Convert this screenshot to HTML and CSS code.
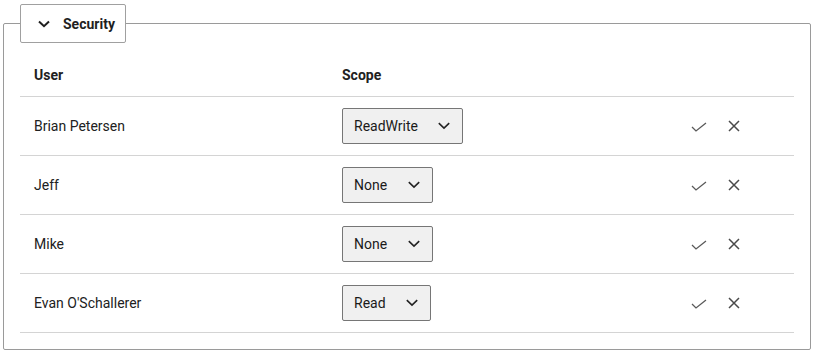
FILE: index.html
```html
<!DOCTYPE html>
<html>
<head>
<meta charset="utf-8">
<link rel="stylesheet" href="styles.css">
</head>
<body>
<fieldset class="panel">
  <legend class="panel-legend">
    <svg class="legend-chevron" width="12" height="8" viewBox="0 0 12 8"><path d="M1 1.5 L6 6.2 L11 1.5" fill="none" stroke="#1f1f1f" stroke-width="2"/></svg>
    <span>Security</span>
  </legend>
  <div class="grid">
    <div class="row head">
      <div class="cell">User</div>
      <div class="cell">Scope</div>
      <div class="cell"></div>
    </div>
    <div class="row">
      <div class="cell">Brian Petersen</div>
      <div class="cell"><div class="select w120"><span>ReadWrite</span><svg class="sel-chev" width="12" height="8" viewBox="0 0 12 8"><path d="M0.8 1.2 L6 6.2 L11.2 1.2" fill="none" stroke="#222" stroke-width="1.6"/></svg></div></div>
      <div class="cell actions">
        <span class="icon"><svg width="24" height="24" viewBox="0 0 24 24"><path d="M5 13 L9 17 L19 9" fill="none" stroke="#5a5a5a" stroke-width="1.3"/></svg></span>
        <span class="icon"><svg width="24" height="24" viewBox="0 0 24 24"><path d="M7 7 L17 17 M17 7 L7 17" fill="none" stroke="#4a4a4a" stroke-width="1.5"/></svg></span>
      </div>
    </div>
    <div class="row">
      <div class="cell">Jeff</div>
      <div class="cell"><div class="select w90"><span>None</span><svg class="sel-chev" width="12" height="8" viewBox="0 0 12 8"><path d="M0.8 1.2 L6 6.2 L11.2 1.2" fill="none" stroke="#222" stroke-width="1.6"/></svg></div></div>
      <div class="cell actions">
        <span class="icon"><svg width="24" height="24" viewBox="0 0 24 24"><path d="M5 13 L9 17 L19 9" fill="none" stroke="#5a5a5a" stroke-width="1.3"/></svg></span>
        <span class="icon"><svg width="24" height="24" viewBox="0 0 24 24"><path d="M7 7 L17 17 M17 7 L7 17" fill="none" stroke="#4a4a4a" stroke-width="1.5"/></svg></span>
      </div>
    </div>
    <div class="row">
      <div class="cell">Mike</div>
      <div class="cell"><div class="select w90"><span>None</span><svg class="sel-chev" width="12" height="8" viewBox="0 0 12 8"><path d="M0.8 1.2 L6 6.2 L11.2 1.2" fill="none" stroke="#222" stroke-width="1.6"/></svg></div></div>
      <div class="cell actions">
        <span class="icon"><svg width="24" height="24" viewBox="0 0 24 24"><path d="M5 13 L9 17 L19 9" fill="none" stroke="#5a5a5a" stroke-width="1.3"/></svg></span>
        <span class="icon"><svg width="24" height="24" viewBox="0 0 24 24"><path d="M7 7 L17 17 M17 7 L7 17" fill="none" stroke="#4a4a4a" stroke-width="1.5"/></svg></span>
      </div>
    </div>
    <div class="row">
      <div class="cell">Evan O'Schallerer</div>
      <div class="cell"><div class="select w88"><span>Read</span><svg class="sel-chev" width="12" height="8" viewBox="0 0 12 8"><path d="M0.8 1.2 L6 6.2 L11.2 1.2" fill="none" stroke="#222" stroke-width="1.6"/></svg></div></div>
      <div class="cell actions">
        <span class="icon"><svg width="24" height="24" viewBox="0 0 24 24"><path d="M5 13 L9 17 L19 9" fill="none" stroke="#5a5a5a" stroke-width="1.3"/></svg></span>
        <span class="icon"><svg width="24" height="24" viewBox="0 0 24 24"><path d="M7 7 L17 17 M17 7 L7 17" fill="none" stroke="#4a4a4a" stroke-width="1.5"/></svg></span>
      </div>
    </div>
  </div>
</fieldset>
</body>
</html>
```
FILE: styles.css
```css
html, body {
  margin: 0;
  padding: 0;
  background: #ffffff;
}
body {
  font-family: Roboto, "Liberation Sans", Arial, sans-serif;
  font-size: 14px;
  color: #212121;
}
.panel {
  box-sizing: border-box;
  width: 808px;
  margin: 4px 0 0 3px;
  padding: 10px 16px 16px 16px;
  border: 1px solid #9a9a9a;
  border-radius: 2px;
  min-width: 0;
}
.panel-legend {
  box-sizing: border-box;
  height: 39px;
  width: 106px;
  padding: 0 0 0 17px;
  margin: 0;
  border: 1px solid #a0a0a0;
  border-radius: 2px;
  display: flex;
  align-items: center;
  font-weight: 700;
  font-size: 14px;
  color: #1f1f1f;
  background: #fff;
}
.legend-chevron {
  display: block;
  margin-right: 13px;
}
.grid {
  display: flex;
  flex-direction: column;
}
.row {
  display: grid;
  grid-template-columns: 308px 1fr auto;
  align-items: center;
  height: 59px;
  border-bottom: 1px solid #d4d4d4;
  box-sizing: border-box;
}
.row.head {
  height: 44px;
  font-weight: 700;
}
.cell {
  padding-left: 14px;
}
.select {
  box-sizing: border-box;
  display: flex;
  align-items: center;
  justify-content: space-between;
  height: 36px;
  padding: 0 12px 0 11px;
  border: 1px solid #767676;
  border-radius: 2px;
  background: #f0f0f0;
  color: #1a1a1a;
}
.w120 { width: 121px; }
.w90 { width: 91px; }
.w88 { width: 89px; }
.sel-chev { display: block; }
.actions {
  display: flex;
  gap: 11px;
  padding-right: 48px;
}
.icon {
  display: block;
  width: 24px;
  height: 24px;
}
.icon svg { display: block; }
```
